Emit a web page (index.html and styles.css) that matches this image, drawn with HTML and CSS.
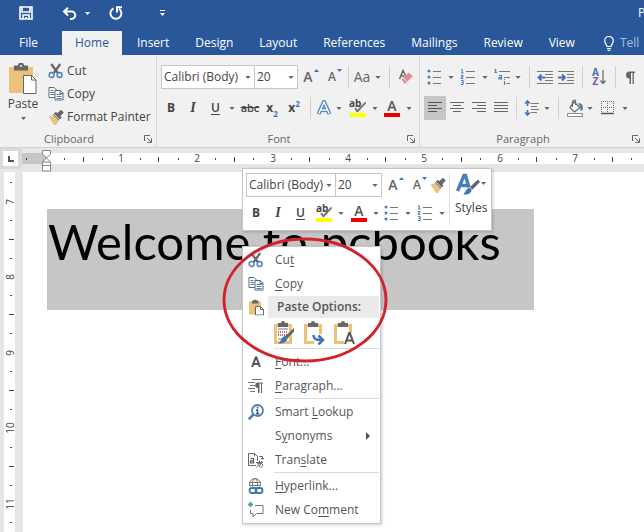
FILE: index.html
```html
<!DOCTYPE html>
<html lang="en">
<head>
<meta charset="utf-8">
<title>Document</title>
<link rel="stylesheet" href="styles.css">
</head>
<body>
<svg class="sprite" aria-hidden="true">
  <symbol id="caret" viewBox="0 0 7 4"><path d="M0 0h7L3.5 4z" fill="#666"/></symbol>
  <symbol id="cut" viewBox="0 0 16 16"><path d="M3.2 1l6.6 9M12.2 1L5.8 10" stroke="#666" stroke-width="2.2" fill="none"/><circle cx="3.6" cy="12" r="2.5" fill="none" stroke="#4a7ebb" stroke-width="1.4"/><circle cx="11.6" cy="12" r="2.5" fill="none" stroke="#4a7ebb" stroke-width="1.4"/></symbol>
  <symbol id="copy" viewBox="0 0 16 16"><path d="M1 1.5h5l2.500 2.500v7.500H1z" fill="#fff" stroke="#666"/><path d="M2.500 4.500h3M2.500 6.500h4M2.500 8.500h4" stroke="#4a7ebb"/><path d="M7 4.500h5.500l2.500 2.500v7H7z" fill="#fff" stroke="#666"/><path d="M12 4.500v3h3" fill="none" stroke="#666"/><path d="M8.500 8.500h5M8.500 10.500h5M8.500 12.500h5" stroke="#4a7ebb"/></symbol>
  <symbol id="brush" viewBox="0 0 16 16"><path d="M0.500 7.500L5.500 6l5.500 5.500-3 4.500H6z" fill="#eac282"/><path d="M5 5.500L7.500 3l2 1L13 .8 15.800 3.500 12.500 7l.8 2-2.600 2.600z" fill="#666"/><path d="M6 5l6 6" stroke="#fff" stroke-width=".8"/></symbol>
  <symbol id="paste-big" viewBox="0 0 28 32"><path d="M0 4h24v26H0z" fill="#eac27a"/><path d="M5 2.500h4a3 3 0 0 1 6 0h4v5H5z" fill="#666"/><circle cx="12" cy="3" r="1.100" fill="#f1f1f1"/><path d="M14.500 12.500h8l4.500 4.500v13.500H14.500z" fill="#fff" stroke="#666"/><path d="M22.500 12.500V17H27" fill="none" stroke="#666"/></symbol>
  <symbol id="paste-small" viewBox="0 0 16 16"><path d="M1 2h12v13H1z" fill="#eac27a"/><path d="M4 1h2a1.200 1.200 0 0 1 2.400 0h2v3H4z" fill="#666"/><path d="M7.500 7h5l3 3v5.500h-8z" fill="#fff" stroke="#666"/><path d="M12.500 7v3h3" fill="none" stroke="#666"/></symbol>
  <symbol id="board" viewBox="0 0 22 24"><path d="M2.500 4.500h15v17h-15z" fill="#fff" stroke="#eac27a" stroke-width="3"/><path d="M5 2h3a2 2 0 0 1 4 0h3v4H5z" fill="#666"/></symbol>
  <symbol id="bullets" viewBox="0 0 16 16"><g fill="#4a7ebb"><circle cx="2" cy="2" r="1.500"/><circle cx="2" cy="8" r="1.500"/><circle cx="2" cy="14" r="1.500"/></g><path d="M6 2.500h8M6 8.500h8M6 14.500h8" stroke="#777"/></symbol>
  <symbol id="numbers" viewBox="0 0 16 16"><path d="M1 1l1.200-.5V4M1 4h2.500M1 6.500h2V8H1.200v1.500H3.500M1 11.500h2.200v4H1M1.500 13.500H3" fill="none" stroke="#4a7ebb"/><path d="M6 2.500h9M6 8.500h9M6 14.500h9" stroke="#777"/></symbol>
  <symbol id="multi" viewBox="0 0 16 16"><path d="M.5 1l1.200-.5V3.500M.5 3.500H3M5 6.500h2.500v3.500H5V8.500h2M10.500 10v1M10.500 12v4" fill="none" stroke="#4a7ebb" stroke-width="1.200"/><path d="M5 2.500h11M10 8.500h6M12.500 14.500H16" stroke="#777"/></symbol>
  <symbol id="shrink" viewBox="0 0 16 16"><path d="M0 2.500h16M8 5.500h8M8 8.500h8M8 11.500h8M0 14.500h16" stroke="#777"/><path d="M8 8.500H2M4.500 5.500l-3 3 3 3" fill="none" stroke="#3f75b5" stroke-width="1.800"/></symbol>
  <symbol id="indent" viewBox="0 0 16 16"><path d="M0 2.500h16M9 5.500h7M9 8.500h7M9 11.500h7M0 14.500h16" stroke="#777"/><path d="M0 8.500h6.500M4 5.500l3 3-3 3" fill="none" stroke="#3f75b5" stroke-width="1.800"/></symbol>
  <symbol id="marker" viewBox="0 0 16 18"><path d="M15.500 2.500L8 10l-2 3 3-1 7-7.500z" fill="#777"/><path d="M5 9l3 4" stroke="#666" stroke-width="1.500"/><path d="M0 14h16v4H0z" fill="#ff0"/></symbol>
  <symbol id="launch" viewBox="0 0 8 8"><path d="M.5 6V.5H6M3 3l4 4M7.500 3.500v4h-4" fill="none" stroke="#666"/></symbol>
</svg>

<header class="top">
  <div class="quick">
    <button class="q-save" aria-label="Save"><svg width="14" height="14" viewBox="0 0 14 14"><path d="M1 1h12v12H1zM3 1v5h8V1M4 13V9h6v4" fill="none" stroke="#fff" stroke-width="1.600"/><path d="M6 11h2v2H6z" fill="#fff"/></svg></button>
    <button class="q-undo" aria-label="Undo"><svg width="15" height="13" viewBox="0 0 15 13"><path d="M2 4.500h7.500a3.500 3.500 0 0 1 0 7.500H8M6 .8L2 4.500l4 4" fill="none" stroke="#fff" stroke-width="2"/></svg></button>
    <button class="q-arrow" aria-label="Undo list"><svg width="5" height="3" viewBox="0 0 5 3"><path d="M0 0h5L2.500 3z" fill="#fff"/></svg></button>
    <button class="q-redo" aria-label="Repeat"><svg width="14" height="14" viewBox="0 0 14 14"><path d="M4.500 2.300a5.500 5.500 0 1 0 5.500.4" fill="none" stroke="#fff" stroke-width="1.900"/><path d="M8 6.500V1.200h5" fill="none" stroke="#fff" stroke-width="1.900"/></svg></button>
    <button class="q-more" aria-label="Customize"><svg width="5" height="6" viewBox="0 0 5 6"><path d="M0 .5h5" stroke="#fff"/><path d="M0 3h5L2.500 6z" fill="#fff"/></svg></button>
    <span class="title">P</span>
  </div>
  <nav class="tabs">
    <a href="#">File</a><a href="#" class="on">Home</a><a href="#">Insert</a><a href="#">Design</a><a href="#">Layout</a><a href="#">References</a><a href="#">Mailings</a><a href="#">Review</a><a href="#">View</a>
    <a href="#" class="tell"><svg width="10" height="15" viewBox="0 0 10 15"><path d="M3 10.500C3 8.500.7 7.500.7 4.800a4.300 4.300 0 0 1 8.600 0C9.300 7.500 7 8.500 7 10.500zM3 12.500h4M3.500 14.300h3" fill="none" stroke="#fff" stroke-width="1.200"/></svg>Tell</a>
  </nav>
</header>

<section class="ribbon">
  <div class="group clip">
    <div class="body clip-body">
      <button class="paste"><svg width="28" height="32"><use href="#paste-big"/></svg><span>Paste</span><svg width="5" height="3"><use href="#caret"/></svg></button>
      <div class="clip-list">
        <button><svg width="16" height="16"><use href="#cut"/></svg>Cut</button>
        <button><svg width="16" height="16"><use href="#copy"/></svg>Copy</button>
        <button><svg width="16" height="16"><use href="#brush"/></svg>Format Painter</button>
      </div>
    </div>
    <div class="caption"><span>Clipboard</span><button aria-label="Clipboard settings"><svg width="8" height="8"><use href="#launch"/></svg></button></div>
  </div>

  <div class="group font">
    <div class="body">
      <div class="row font-1">
        <label class="pick"><select aria-label="Font"><option>Calibri (Body)</option></select><svg width="6" height="3"><use href="#caret"/></svg></label>
        <label class="pick"><select aria-label="Font size"><option>20</option></select><svg width="6" height="3"><use href="#caret"/></svg></label>
        <button class="grow" aria-label="Grow font">A<svg width="5" height="3" viewBox="0 0 5 3"><path d="M0 3h5L2.500 0z" fill="#3f75b5"/></svg></button>
        <button class="grow less" aria-label="Shrink font">A<svg width="5" height="3" viewBox="0 0 5 3"><path d="M0 0h5L2.500 3z" fill="#3f75b5"/></svg></button>
        <i class="sep"></i>
        <button class="case">Aa</button>
        <button aria-label="Case list"><svg width="6" height="3"><use href="#caret"/></svg></button>
        <i class="sep"></i>
        <button aria-label="Clear formatting"><svg width="16" height="16" viewBox="0 0 16 16"><path d="M1.500 10L5 1.500 8 8M3 7h3" fill="none" stroke="#666" stroke-width="1.500"/><path d="M3.500 10.500L10.500 3.500 15 7 7 15z" fill="#e8899a"/><path d="M5 9l5 4.500" stroke="#f8d5da"/></svg></button>
      </div>
      <div class="row font-2">
        <button class="b">B</button><button class="i">I</button><button class="u">U</button>
        <button aria-label="Underline list"><svg width="6" height="3"><use href="#caret"/></svg></button>
        <button class="strike">abc</button>
        <button class="script">x<sub>2</sub></button>
        <button class="script">x<sup>2</sup></button>
        <i class="sep"></i>
        <button aria-label="Text effects"><svg width="16" height="16" viewBox="0 0 16 16"><path d="M2.500 14L8 2l5.500 12M5 10h6" fill="none" stroke="#b9d3ee" stroke-width="5"/><path d="M2.500 14L8 2l5.500 12M5 10h6" fill="none" stroke="#3f75b5" stroke-width="3.400"/><path d="M2.800 13.500L8 2l5.200 11.500M5 10h6" fill="none" stroke="#fff" stroke-width="1.500"/></svg></button>
        <button aria-label="Effects list"><svg width="6" height="3"><use href="#caret"/></svg></button>
        <button class="ink hl"><span>ab</span><svg width="16" height="18"><use href="#marker"/></svg></button>
        <button aria-label="Highlight list"><svg width="6" height="3"><use href="#caret"/></svg></button>
        <button class="ink color">A</button>
        <button aria-label="Color list"><svg width="6" height="3"><use href="#caret"/></svg></button>
      </div>
    </div>
    <div class="caption"><span>Font</span><button aria-label="Font settings"><svg width="8" height="8"><use href="#launch"/></svg></button></div>
  </div>

  <div class="group para">
    <div class="body">
      <div class="row para-1">
        <button aria-label="Bullets"><svg width="16" height="16"><use href="#bullets"/></svg></button>
        <button aria-label="Bullets list"><svg width="6" height="3"><use href="#caret"/></svg></button>
        <button aria-label="Numbering"><svg width="16" height="16"><use href="#numbers"/></svg></button>
        <button aria-label="Numbering list"><svg width="6" height="3"><use href="#caret"/></svg></button>
        <button aria-label="Multilevel list"><svg width="16" height="16"><use href="#multi"/></svg></button>
        <button aria-label="Multilevel options"><svg width="6" height="3"><use href="#caret"/></svg></button>
        <i class="sep"></i>
        <button aria-label="Decrease indent"><svg width="16" height="16"><use href="#shrink"/></svg></button>
        <button aria-label="Increase indent"><svg width="16" height="16"><use href="#indent"/></svg></button>
        <i class="sep"></i>
        <button class="sort" aria-label="Sort"><span><b>A</b><b>Z</b></span><svg width="6" height="16" viewBox="0 0 6 16"><path d="M3 1v13M.5 11.500L3 14.500l2.500-3" fill="none" stroke="#666" stroke-width="1.200"/></svg></button>
        <i class="sep"></i>
        <button aria-label="Show marks"><svg width="11" height="13" viewBox="0 0 11 13"><path d="M5.500 7.500a3.500 3.500 0 0 1 0-7H11V2H9.800v11H8.500V2H7v11H5.500z" fill="#666"/></svg></button>
      </div>
      <div class="row para-2">
        <button class="pressed" aria-label="Align left"><svg width="14" height="12" viewBox="0 0 14 12"><path d="M0 .5h14M0 3.500h9M0 6.500h14M0 9.500h9" stroke="#555"/></svg></button>
        <button aria-label="Center"><svg width="14" height="12" viewBox="0 0 14 12"><path d="M0 .5h14M3 3.500h8M0 6.500h14M3 9.500h8" stroke="#666"/></svg></button>
        <button aria-label="Align right"><svg width="14" height="12" viewBox="0 0 14 12"><path d="M0 .5h14M5 3.500h9M0 6.500h14M5 9.500h9" stroke="#666"/></svg></button>
        <button aria-label="Justify"><svg width="14" height="12" viewBox="0 0 14 12"><path d="M0 .5h14M0 3.500h14M0 6.500h14M0 9.500h14" stroke="#666"/></svg></button>
        <i class="sep"></i>
        <button aria-label="Line spacing"><svg width="16" height="18" viewBox="0 0 16 18"><path d="M3.500 2v5M3.500 11v5M1 4.500L3.500 2 6 4.500M1 13.500L3.500 16 6 13.500" fill="none" stroke="#3f75b5" stroke-width="1.600"/><path d="M7 4.500h8M7 7.500h6M7 10.500h8M7 13.500h6" stroke="#777"/></svg></button>
        <button aria-label="Spacing list"><svg width="6" height="3"><use href="#caret"/></svg></button>
        <i class="sep"></i>
        <button aria-label="Shading"><svg width="16" height="18" viewBox="0 0 16 18"><path d="M7 3l6 5.500-5.500 4.500L3 8.500z" fill="#fff" stroke="#666" stroke-width="1.200"/><path d="M5.500 8V3a2 2 0 0 1 3-1.500V6" fill="none" stroke="#666" stroke-width="1.200"/><path d="M11 4c4 0 5.500 3 4.500 7L13.500 12V8z" fill="#3f75b5"/><path d="M.5 14.500h15v3H.5z" fill="#fff" stroke="#888"/></svg></button>
        <button aria-label="Shading list"><svg width="6" height="3"><use href="#caret"/></svg></button>
        <button aria-label="Borders"><svg width="14" height="14" viewBox="0 0 14 14"><path d="M.5 0v12M12.500 0v12M0 .5h13M6.500 0v12M0 6.500h13" stroke="#666" stroke-dasharray="1 1"/><path d="M0 12.500h13" stroke="#555" stroke-width="1.500"/></svg></button>
        <button aria-label="Borders list"><svg width="6" height="3"><use href="#caret"/></svg></button>
      </div>
    </div>
    <div class="caption"><span>Paragraph</span><button aria-label="Paragraph settings"><svg width="8" height="8"><use href="#launch"/></svg></button></div>
  </div>
</section>

<main class="work">
  <div class="ruler">
    <button class="tabstop" aria-label="Tab stop"><svg width="6" height="6" viewBox="0 0 6 6"><path d="M1 0v5h5" fill="none" stroke="#555" stroke-width="2"/></svg></button>
    <svg class="scale" height="24">
      <rect x="0" y="5" width="100%" height="11" fill="#fff"/><rect x="0" y="5" width="24" height="11" fill="#c6c6c6"/>
      <path d="M4 11h1M42 11h1M80 11h1M118 11h1M156 11h1M193 11h1M231 11h1M269 11h1M307 11h1M345 11h1M383 11h1M420 11h1M458 11h1M496 11h1M534 11h1M572 11h1M609 11h1" stroke="#444" stroke-width="2"/>
      <path d="M61.500 9v5M136.500 9v5M212.500 9v5M287.500 9v5M363.500 9v5M439.500 9v5M514.500 9v5M590.500 9v5" stroke="#444"/>
      <g class="num"><text x="99" y="14">1</text><text x="175" y="14">2</text><text x="251" y="14">3</text><text x="326" y="14">4</text><text x="402" y="14">5</text><text x="478" y="14">6</text><text x="553" y="14">7</text></g>
      <path d="M20.500 2.500h8V6l-4 4 4 4v9h-8v-9l4-4-4-4zM20.500 17.500h8M20.500 14h8" fill="#fff" stroke="#888"/>
    </svg>
  </div>
  <div class="canvas">
    <svg class="vscale" width="11">
      <path d="M6 10.500h2M6 48.500h2M6 86.500h2M6 123.500h2M6 161.500h2M6 199.500h2M6 237.500h2M6 275.500h2M6 313.500h2M6 350.500h2M5 67.500h5M5 142.500h5M5 218.500h5M5 294.500h5" stroke="#444"/>
      <g class="num"><text transform="translate(10 30) rotate(-90)">7</text><text transform="translate(10 105) rotate(-90)">8</text><text transform="translate(10 181) rotate(-90)">9</text><text transform="translate(10 256) rotate(-90)">10</text><text transform="translate(10 332) rotate(-90)">11</text></g>
    </svg>
    <article class="page"><p><mark>Welcome to pcbooks</mark></p></article>
  </div>

  <div class="mini">
    <div class="mini-tools">
      <div class="row mini-1">
        <label class="pick"><select aria-label="Font"><option>Calibri (Body)</option></select><svg width="6" height="3"><use href="#caret"/></svg></label>
        <label class="pick"><select aria-label="Font size"><option>20</option></select><svg width="6" height="3"><use href="#caret"/></svg></label>
        <button class="grow" aria-label="Grow font">A<svg width="5" height="3" viewBox="0 0 5 3"><path d="M0 3h5L2.500 0z" fill="#3f75b5"/></svg></button>
        <button class="grow less" aria-label="Shrink font">A<svg width="5" height="3" viewBox="0 0 5 3"><path d="M0 0h5L2.500 3z" fill="#3f75b5"/></svg></button>
        <button aria-label="Format painter"><svg width="16" height="16"><use href="#brush"/></svg></button>
      </div>
      <div class="row mini-2">
        <button class="b">B</button><button class="i">I</button><button class="u">U</button>
        <button class="ink hl"><span>ab</span><svg width="16" height="18"><use href="#marker"/></svg></button>
        <button aria-label="Highlight list"><svg width="6" height="3"><use href="#caret"/></svg></button>
        <button class="ink color">A</button>
        <button aria-label="Color list"><svg width="6" height="3"><use href="#caret"/></svg></button>
        <button aria-label="Bullets"><svg width="16" height="16"><use href="#bullets"/></svg></button>
        <button aria-label="Bullets list"><svg width="6" height="3"><use href="#caret"/></svg></button>
        <button aria-label="Numbering"><svg width="16" height="16"><use href="#numbers"/></svg></button>
        <button aria-label="Numbering list"><svg width="6" height="3"><use href="#caret"/></svg></button>
      </div>
    </div>
    <button class="styles"><svg width="32" height="24" viewBox="0 0 32 24"><path d="M2.500 18L9 2.500h1.500L15 18M5 12.500h9" fill="none" stroke="#4a7ebb" stroke-width="3.400"/><path d="M23 6.500l2 2.500-8 8-2.500-2.500z" fill="#666"/><path d="M14 14.500c3 .5 4 3 1.500 5.500-2 2-5 2.500-8 1.500 3-2 2.500-5.500 6.500-7z" fill="#3f75b5" stroke="#fff" stroke-width=".8"/><path d="M26 9h5l-2.500 3z" fill="#666"/></svg><span>Styles</span></button>
  </div>

  <div class="menu">
    <button><svg width="16" height="16"><use href="#cut"/></svg><span>Cu<u>t</u></span></button>
    <button><svg width="16" height="16"><use href="#copy"/></svg><span><u>C</u>opy</span></button>
    <div class="head"><svg width="16" height="17" viewBox="0 0 16 16"><use href="#paste-small"/></svg><strong>Paste Options:</strong></div>
    <div class="options">
      <button aria-label="Keep source formatting"><svg width="22" height="24" viewBox="0 0 22 24"><use href="#board"/><path d="M5 8h10M5 18h5" stroke="#777"/><path d="M5 11h10M5 14h10" stroke="#c66" stroke-width="2" stroke-dasharray="1 1"/><path d="M21 7v3.500L14 18l-2.500-2.500z" fill="#666"/><path d="M11.500 15l3 3c-2 4-5 5-9.500 4.500 3-1 3-6 6.500-7.500z" fill="#3f75b5"/></svg></button>
      <button aria-label="Merge formatting"><svg width="22" height="24" viewBox="0 0 22 24"><use href="#board"/><path d="M11 13h9v11h-9z" fill="#fff"/><path d="M10.500 14c0 4 2 5 8 5M15.500 14.500l4.500 4.500-4.500 4.500" fill="none" stroke="#3f75b5" stroke-width="2.500"/></svg></button>
      <button aria-label="Keep text only"><svg width="22" height="24" viewBox="0 0 22 24"><use href="#board"/><path d="M11 12h9v11h-9z" fill="#fff"/><path d="M12 23l4.200-11h.6L21 23M13.500 19.500h6" fill="none" stroke="#555" stroke-width="2"/></svg></button>
    </div>
    <hr>
    <button><svg width="16" height="16" viewBox="0 0 16 16"><path d="M4 13L7.800 3.500h.6L12 13M5.500 10h5" fill="none" stroke="#555" stroke-width="2"/></svg><span><u>F</u>ont...</span></button>
    <button><svg width="16" height="16" viewBox="0 0 16 16"><path d="M4 1.500h10M0 4.500h7M2 7.500h5M0 10.500h7M2 13.500h5" stroke="#777"/><path d="M10 10a2.500 2.500 0 0 1 0-5.500h5v1h-1V15h-1V5.500h-1.500V15H10z" fill="#666"/></svg><span><u>P</u>aragraph...</span></button>
    <hr>
    <button><svg width="16" height="16" viewBox="0 0 16 16"><circle cx="9.500" cy="6.500" r="5.500" fill="#fff" stroke="#4a7ebb" stroke-width="1.800"/><path d="M5.500 10.500L.8 15.200" stroke="#4a7ebb" stroke-width="2.600"/><path d="M9.500 2.800v1.700M8 6h1.500v4M8 9.800h3.200" fill="none" stroke="#555" stroke-width="1.500"/></svg><span>Smart <u>L</u>ookup</span></button>
    <button><i></i><span>S<u>y</u>nonyms</span><svg class="more" width="4" height="8" viewBox="0 0 4 8"><path d="M0 0l4 4-4 4z" fill="#555"/></svg></button>
    <button><svg width="16" height="16" viewBox="0 0 16 16"><path d="M8 13.500H.5V1.500h6l3 3V9M6.500 1.500v3" fill="none" stroke="#666"/><path d="M2.500 6.500h3v4.500h-3V8.800h3" fill="none" stroke="#555" stroke-width="1.200"/><path d="M11 4.500h3.500V7M13 6l1.500 1.500L16 6" fill="none" stroke="#3f75b5"/><path d="M8 10.500h7M11.500 8.500c-.5 4-1 5-3 6.500M9 12c3-1.500 6-1 5.500 1.500-.3 1.500-1.500 2-2.500 2M14 9l-3 6" fill="none" stroke="#666"/></svg><span>Tran<u>s</u>late</span></button>
    <hr>
    <button><svg width="16" height="16" viewBox="0 0 16 16"><g fill="none" stroke="#777"><circle cx="7" cy="6" r="5.500"/><ellipse cx="7" cy="6" rx="2.500" ry="5.500"/><path d="M1.500 4.500h11M1.500 7.500h11"/></g><path d="M0 8.500h16V16H0z" fill="#fff"/><rect x="1.500" y="10" width="7" height="5" rx="2.500" fill="none" stroke="#3f75b5" stroke-width="1.800"/><rect x="7.500" y="10" width="7" height="5" rx="2.500" fill="none" stroke="#3f75b5" stroke-width="1.800"/></svg><span><u>H</u>yperlink...</span></button>
    <button><svg width="16" height="16" viewBox="0 0 16 16"><path d="M7 3.500h8v8H8.500L5 15v-3.500H2.500V8" fill="none" stroke="#777"/><path d="M2.500 0v5M0 2.500h5" stroke="#4aa583" stroke-width="2"/></svg><span>New Co<u>m</u>ment</span></button>
  </div>

  <svg class="ring" width="166" height="128" viewBox="0 0 166 128" aria-hidden="true"><ellipse cx="83" cy="64" rx="81" ry="61" fill="none" stroke="#d3232a" stroke-width="3"/></svg>
</main>
</body>
</html>
```
FILE: styles.css
```css
* { box-sizing: border-box; }
html, body { height: 100%; }
body {
  margin: 0;
  display: flex;
  flex-direction: column;
  overflow: hidden;
  font: 12px/16px "Open Sans", "Noto Sans", sans-serif;
  color: #444;
  background: #e6e6e6;
}
.sprite { position: absolute; width: 0; height: 0; }
button, select {
  font: inherit;
  color: inherit;
  background: none;
  border: 0;
  border-radius: 0;
  margin: 0;
  padding: 0;
}
svg { flex: none; display: block; }

/* title bar and tabs */
.top { background: #2a579a; color: #fff; flex: none; }
.quick { display: flex; align-items: center; height: 31px; padding: 0 0 5px 19px; }
.quick button { display: grid; place-items: center; height: 26px; }
.q-save { width: 14px; }
.q-undo { width: 15px; margin-left: 29px; }
.q-arrow { width: 11px; margin-left: 5px; }
.q-redo { width: 14px; margin-left: 16px; }
.q-more { width: 11px; margin-left: 34px; }
.title { margin-left: auto; width: 6px; overflow: hidden; }
.tabs { display: flex; height: 24px; white-space: nowrap; }
.tabs a { padding: 0 13px; color: #fff; text-decoration: none; line-height: 24px; }
.tabs a:first-child { padding: 0 24px 0 19px; }
.tabs .on { background: #f1f1f1; color: #2a579a; }
.tabs .on + a { padding-left: 15px; }
.tabs .tell { display: flex; align-items: center; gap: 6px; padding: 0 0 0 16px; color: #a9bedb; }

/* ribbon */
.ribbon {
  flex: none;
  display: grid;
  grid-template-columns: 157px 263px 1fr;
  background: #f1f1f1;
  border-bottom: 1px solid #d0d0d0;
  height: 93px;
}
.group { display: flex; flex-direction: column; padding: 4px 0 0 4px; position: relative; border-right: 1px solid #d5d5d5; }
.group:last-child { border: 0; }
.body { flex: 1; }
.caption { display: flex; align-items: center; height: 16px; color: #666; padding-right: 3px; margin-left: -4px; font-size: 11px; }
.caption span { flex: 1; text-align: center; padding-right: 6px; }
.caption button { width: 9px; height: 9px; }
.clip-body { display: flex; gap: 6px; }
.paste { display: flex; flex-direction: column; align-items: center; justify-content: flex-start; width: 38px; padding-top: 4px; }
.paste span { margin: 1px 0 5px; line-height: 16px; }
.clip-list button { display: flex; align-items: center; gap: 3px; height: 23px; white-space: nowrap; }
.row { display: grid; height: 24px; }
.row > button { display: flex; align-items: center; justify-content: center; }
.ribbon .row:first-child { margin: 6px 0 7px; }
.sep { width: 1px; height: 22px; background: #d0d0d0; align-self: center; justify-self: center; }
.font-1 { grid-template-columns: 94px 43px 26px 22px 4px 24px 8px 14px 20px; }
.font-2 { grid-template-columns: 20px 24px 21px 12px 24px 20px 24px 8px 20px 10px 28px 6px 28px 6px; }
.para-1 { grid-template-columns: 22px 10px 24px 10px 24px 8px 14px 18px 24px 8px 26px 6px 22px; }
.para-2 { grid-template-columns: 22px 22px 22px 22px 8px 24px 6px 16px 18px 12px 24px 10px; }
.pick { display: grid; grid-template-columns: 1fr 12px; align-items: center; border: 1px solid #c6c6c6; background: #fff; overflow: hidden; }
.pick + .pick { border-left: 0; }
.pick select { appearance: none; grid-area: 1 / 1 / 2 / 3; width: 100%; height: 22px; padding-left: 2px; outline: 0; }
.pick svg { grid-area: 1 / 2; justify-self: center; }
.grow { gap: 1px; font-size: 14px; font-weight: 600; color: #666; }
.grow svg { align-self: flex-start; margin-top: 4px; }
.less { font-size: 12px; }
.case { font-size: 14px; color: #666; }
.b { font-weight: 700; }
.i { font: italic 700 14px "Liberation Serif", serif; }
.u { font-weight: 600; text-decoration: underline; text-underline-offset: 2px; }
.strike { text-decoration: line-through; font-size: 11px; font-weight: 600; }
.script { font-weight: 700; }
.script sub, .script sup { font-size: 8px; line-height: 8px; color: #3f75b5; }
.script sub { align-self: flex-end; margin-bottom: 2px; }
.script sup { align-self: flex-start; margin-top: 4px; }
.row > .hl { display: grid; justify-content: stretch; }
.hl span { grid-area: 1 / 1; align-self: start; justify-self: start; padding-left: 5px; font-size: 10px; line-height: 14px; font-weight: 700; }
.hl svg { grid-area: 1 / 1; place-self: center; }
.row > .color { align-self: center; justify-self: center; width: 16px; height: 18px; border-bottom: 4px solid #e00; font-size: 14px; font-weight: 600; line-height: 14px; color: #555; }
.pressed { background: #c6c6c6; }
.sort { gap: 1px; }
.sort b { display: block; font: 700 10px/9px "Open Sans", sans-serif; color: #3f75b5; }
.sort b + b { color: #8650a0; }

/* rulers and page */
.work { position: relative; flex: 1; display: flex; flex-direction: column; min-height: 0; }
.ruler { display: flex; height: 24px; flex: none; }
.tabstop { width: 22px; height: 21px; border: solid #dadada; border-width: 3px 4px 3px 3px; background: #fff; display: grid; place-items: center; }
.scale { flex: 1; min-width: 0; }
.num { font-size: 10px; fill: #444; text-anchor: middle; }
.canvas { flex: 1; display: flex; gap: 8px; padding-left: 4px; min-height: 0; }
.vscale { background: #fff; height: 100%; }
.page { flex: 1; background: #fff; padding: 37px 24px; }
.page p { margin: 0; }
.page mark { display: block; width: 487px; height: 101px; background: #c6c6c6; color: #000; font: 49px/64px Lato, sans-serif; padding-left: 1px; white-space: nowrap; }

/* floating toolbar */
.mini {
  position: absolute;
  left: 242px;
  top: 20px;
  display: flex;
  background: #fff;
  border: 1px solid #c6c6c6;
  box-shadow: 1px 1px 3px #0003;
  padding: 4px 4px 5px 3px;
}
.mini-tools { border-right: 1px solid #ddd; padding-right: 3px; }
.mini .row + .row { margin-top: 4px; }
.mini-1 { grid-template-columns: 90px 46px 28px 20px 16px; }
.mini-2 { grid-template-columns: 20px 24px 21px 26px 8px 28px 6px 26px 6px 28px 6px; }
.styles { display: flex; flex-direction: column; align-items: flex-start; gap: 3px; padding-left: 5px; }

/* context menu */
.menu {
  position: absolute;
  left: 242px;
  top: 98px;
  width: 139px;
  padding: 1px 1px;
  background: #fff;
  border: 1px solid #c6c6c6;
  box-shadow: 1px 1px 3px #0003;
}
.menu > button { display: grid; grid-template-columns: 27px 1fr 13px; align-items: center; width: 100%; height: 24px; padding-left: 4px; text-align: left; white-space: nowrap; color: #555; }
.menu u { text-underline-offset: 2px; }
.menu hr { margin: 0 0 1px 30px; border: 0; height: 1px; background: #dadada; }
.head { display: grid; grid-template-columns: 20px 1fr; align-items: center; height: 22px; padding-left: 4px; }
.head strong { background: #eaeaea; line-height: 22px; padding-left: 9px; color: #555; font-weight: 600; }
.options { display: flex; gap: 8px; height: 30px; padding-left: 29px; align-items: center; }
.more { justify-self: start; }

.ring { position: absolute; left: 222px; top: 88px; pointer-events: none; }
```
